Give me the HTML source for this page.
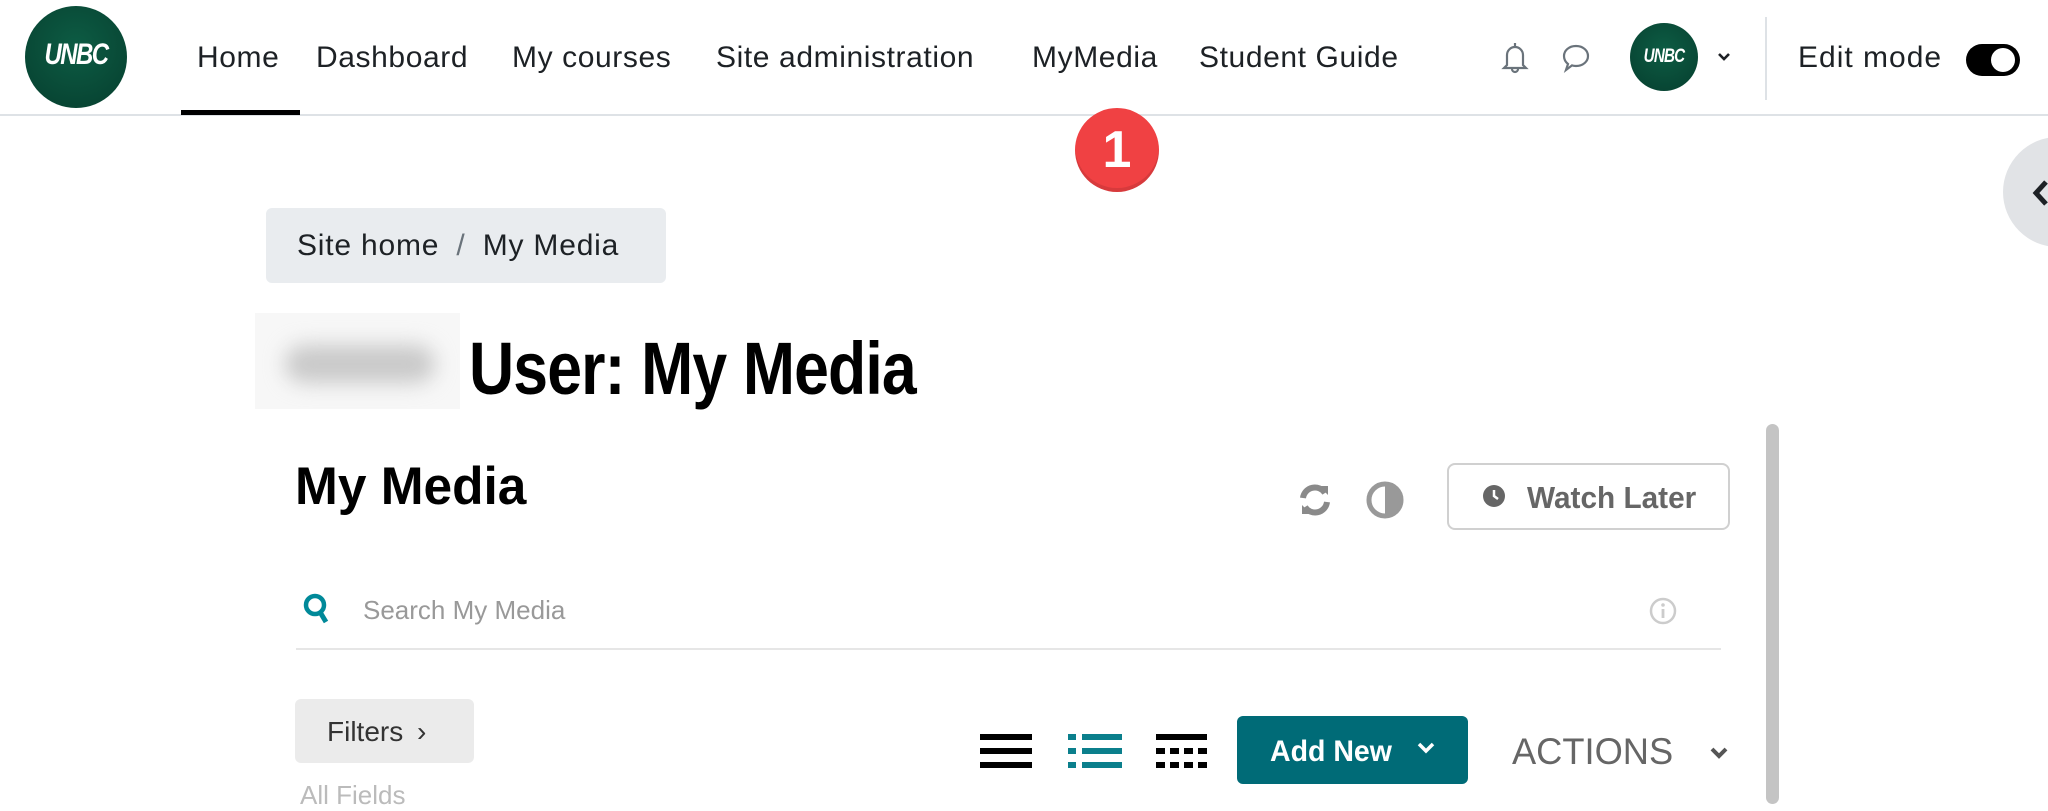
<!DOCTYPE html>
<html><head><meta charset="utf-8"><style>
*{margin:0;padding:0;box-sizing:border-box}
body{width:2048px;height:788px;overflow:hidden;background:#fff;font-family:"Liberation Sans",sans-serif;position:relative;color:#1d2125}
.a{position:absolute;white-space:nowrap}
.nav{font-size:30px;color:#1d2125;top:41px;letter-spacing:0.6px}
</style></head><body>
<div class="a" style="left:0;top:0;width:2048px;height:116px;border-bottom:2px solid #dee2e6;background:#fff"></div>
<div class="a" style="left:25px;top:6px;width:102px;height:102px;border-radius:50%;background:radial-gradient(circle at 50% 40%,#0d5c44,#063e2e)"></div>
<div class="a" style="left:36px;top:38px;width:80px;text-align:center;color:#fff;font-weight:bold;font-style:italic;font-size:30px;letter-spacing:-2px;transform:scaleX(0.8)">UNBC</div>
<div class="a nav" style="left:197px">Home</div>
<div class="a nav" style="left:316px">Dashboard</div>
<div class="a nav" style="left:512px">My courses</div>
<div class="a nav" style="left:716px">Site administration</div>
<div class="a nav" style="left:1032px">MyMedia</div>
<div class="a nav" style="left:1199px">Student Guide</div>
<div class="a" style="left:181px;top:110px;width:119px;height:5px;background:#000"></div>
<svg class="a" style="left:1500px;top:40px" width="30" height="34" viewBox="0 0 30 34"><path d="M15 3v3M7 25V15a8 8 0 0 1 16 0v10l3 3H4z M12 29a3 3 0 0 0 6 0" fill="none" stroke="#6a737b" stroke-width="2.2"/></svg>
<svg class="a" style="left:1560px;top:42px" width="32" height="32" viewBox="0 0 32 32"><path d="M16 4c7 0 12 4.5 12 10s-5 10-12 10c-1.5 0-3-.2-4-.6L6 28l2-6c-2.5-2-4-4.5-4-8C4 8.5 9 4 16 4z" fill="none" stroke="#6a737b" stroke-width="2.2"/></svg>
<div class="a" style="left:1630px;top:23px;width:68px;height:68px;border-radius:50%;background:radial-gradient(circle at 50% 40%,#0d5c44,#063e2e)"></div>
<div class="a" style="left:1636px;top:46px;width:56px;text-align:center;color:#fff;font-weight:bold;font-style:italic;font-size:19px;letter-spacing:-1px;transform:scaleX(0.8)">UNBC</div>
<svg class="a" style="left:1716px;top:51px" width="16" height="12" viewBox="0 0 16 12"><path d="M3 3l5 5 5-5" fill="none" stroke="#1d2125" stroke-width="2.6"/></svg>
<div class="a" style="left:1765px;top:17px;width:2px;height:83px;background:#dee2e6"></div>
<div class="a nav" style="left:1798px;letter-spacing:1px">Edit mode</div>
<div class="a" style="left:1966px;top:44px;width:54px;height:32px;border-radius:16px;background:#000"></div>
<div class="a" style="left:1991px;top:48px;width:24px;height:24px;border-radius:50%;background:#fff"></div>
<div class="a" style="left:1075px;top:108px;width:84px;height:84px;border-radius:50%;background:#f04143;box-shadow:inset 0 -4px 0 rgba(0,0,0,.1)"></div>
<div class="a" style="left:1075px;top:120px;width:84px;text-align:center;color:#fff;font-weight:bold;font-size:52px">1</div>
<div class="a" style="left:2003px;top:137px;width:110px;height:110px;border-radius:50%;background:#e1e3e6"></div>
<svg class="a" style="left:2030px;top:178px" width="18" height="30" viewBox="0 0 18 30"><path d="M16 4L6 15l10 11" fill="none" stroke="#1d2125" stroke-width="5"/></svg>
<div class="a" style="left:266px;top:208px;width:400px;height:75px;background:#e9ecef;border-radius:6px"></div>
<div class="a" style="left:297px;top:229px;font-size:30px;letter-spacing:0.8px;color:#1d2125">Site home <span style="color:#6a737b;margin:0 8px">/</span> My Media</div>
<div class="a" style="left:255px;top:313px;width:205px;height:96px;background:#f7f7f7"></div>
<div class="a" style="left:285px;top:345px;width:150px;height:38px;border-radius:20px;background:#c9c9c9;filter:blur(10px)"></div>
<div class="a" style="left:469px;top:326px;font-size:74px;font-weight:bold;color:#000;transform:scaleX(0.845);transform-origin:0 0;letter-spacing:-1px">User: My Media</div>
<div class="a" style="left:1766px;top:424px;width:13px;height:380px;border-radius:7px;background:#c4c4c4"></div>
<div class="a" style="left:295px;top:456px;font-size:53px;font-weight:bold;color:#000;transform:scaleX(0.97);transform-origin:0 0">My Media</div>
<svg class="a" style="left:1297px;top:482px" width="36" height="36" viewBox="0 0 36 36"><path d="M6 16A12 12 0 0 1 28 11" fill="none" stroke="#8a8a8a" stroke-width="6"/><path d="M22 4h9v9z" fill="#8a8a8a"/><path d="M30 20A12 12 0 0 1 8 25" fill="none" stroke="#8a8a8a" stroke-width="6"/><path d="M14 32H5v-9z" fill="#8a8a8a"/></svg>
<svg class="a" style="left:1365px;top:480px" width="40" height="40" viewBox="0 0 40 40"><circle cx="20" cy="20" r="16" fill="none" stroke="#999" stroke-width="5"/><path d="M20 4a16 16 0 0 1 0 32z" fill="#999"/></svg>
<div class="a" style="left:1447px;top:463px;width:283px;height:67px;border:2px solid #d0d0d0;border-radius:8px"></div>
<svg class="a" style="left:1482px;top:484px" width="24" height="24" viewBox="0 0 24 24"><circle cx="12" cy="12" r="11" fill="#666"/><path d="M12 6v6l4 3" fill="none" stroke="#fff" stroke-width="2.5"/></svg>
<div class="a" style="left:1527px;top:480px;font-size:31px;font-weight:bold;color:#666;transform:scaleX(0.96);transform-origin:0 0">Watch Later</div>
<svg class="a" style="left:302px;top:592px" width="30" height="34" viewBox="0 0 30 34"><circle cx="13" cy="13" r="9" fill="none" stroke="#008999" stroke-width="4.5"/><path d="M18 20l6 10" stroke="#008999" stroke-width="5"/></svg>
<div class="a" style="left:363px;top:595px;font-size:26px;color:#999">Search My Media</div>
<svg class="a" style="left:1648px;top:596px" width="30" height="30" viewBox="0 0 30 30"><circle cx="15" cy="15" r="12" fill="none" stroke="#ccc" stroke-width="2.5"/><circle cx="15" cy="9" r="1.8" fill="#ccc"/><path d="M15 13v9" stroke="#ccc" stroke-width="2.8"/></svg>
<div class="a" style="left:296px;top:648px;width:1425px;height:2px;background:#e6e6e6"></div>
<div class="a" style="left:295px;top:699px;width:179px;height:64px;background:#ebebeb;border-radius:6px"></div>
<div class="a" style="left:327px;top:716px;font-size:28px;color:#333">Filters <span style="margin-left:6px">›</span></div>
<svg class="a" style="left:980px;top:732px" width="230" height="38" viewBox="0 0 230 38">
<g fill="#000"><rect x="0" y="2" width="52" height="6"/><rect x="0" y="16" width="52" height="6"/><rect x="0" y="30" width="52" height="6"/></g>
<g fill="#0b7f8c"><rect x="88" y="2" width="8" height="6"/><rect x="102" y="2" width="40" height="6"/><rect x="88" y="16" width="8" height="6"/><rect x="102" y="16" width="40" height="6"/><rect x="88" y="30" width="8" height="6"/><rect x="102" y="30" width="40" height="6"/></g>
<g fill="#000"><rect x="176" y="2" width="51" height="6"/><rect x="176" y="16" width="9" height="6"/><rect x="190" y="16" width="9" height="6"/><rect x="204" y="16" width="9" height="6"/><rect x="218" y="16" width="9" height="6"/><rect x="176" y="30" width="9" height="6"/><rect x="190" y="30" width="9" height="6"/><rect x="204" y="30" width="9" height="6"/><rect x="218" y="30" width="9" height="6"/></g></svg>
<div class="a" style="left:1237px;top:716px;width:231px;height:68px;background:#006b77;border-radius:6px"></div>
<div class="a" style="left:1270px;top:735px;font-size:30px;font-weight:bold;color:#fff;transform:scaleX(0.95);transform-origin:0 0">Add New</div>
<svg class="a" style="left:1416px;top:740px" width="20" height="16" viewBox="0 0 20 16"><path d="M3 4l7 7 7-7" fill="none" stroke="#fff" stroke-width="3.5"/></svg>
<div class="a" style="left:1512px;top:731px;font-size:37px;color:#666;transform:scaleX(0.98);transform-origin:0 0">ACTIONS</div>
<svg class="a" style="left:1708px;top:744px" width="22" height="18" viewBox="0 0 22 18"><path d="M4 5l7 7 7-7" fill="none" stroke="#555" stroke-width="4"/></svg>
<div class="a" style="left:300px;top:780px;font-size:26px;color:#bbb">All Fields</div>
</body></html>
